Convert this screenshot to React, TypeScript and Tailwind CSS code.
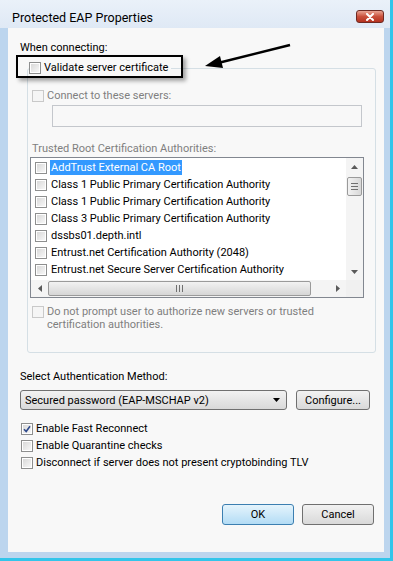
import React from 'react'

const CERTS = [
  'AddTrust External CA Root',
  'Class 1 Public Primary Certification Authority',
  'Class 1 Public Primary Certification Authority',
  'Class 3 Public Primary Certification Authority',
  'dssbs01.depth.intl',
  'Entrust.net Certification Authority (2048)',
  'Entrust.net Secure Server Certification Authority',
]

function CheckBox({ checked = false, disabled = false }: { checked?: boolean; disabled?: boolean }) {
  if (disabled) {
    return <span className="block h-3 w-3 shrink-0 border border-[#c9c9c9] bg-[#f5f5f5]" />
  }
  return (
    <span className="flex h-3 w-3 shrink-0 border border-[#8e8f8f] bg-white p-[1px]">
      <span className="flex h-full w-full items-center justify-center bg-gradient-to-br from-[#d9d9d9] to-[#f7f7f7]">
        {checked && (
          <svg viewBox="0 0 8 8" className="h-[8px] w-[8px]">
            <path d="M1 4.2 L3.2 6.5 L7 1.2" fill="none" stroke="#2f4a8c" strokeWidth="1.6" />
          </svg>
        )}
      </span>
    </span>
  )
}

function Tri({ dir }: { dir: 'up' | 'down' | 'left' | 'right' }) {
  const d = {
    up: 'M0 4 L3.5 0 L7 4 Z',
    down: 'M0 0 L7 0 L3.5 4 Z',
    left: 'M4 0 L4 7 L0 3.5 Z',
    right: 'M0 0 L4 3.5 L0 7 Z',
  }[dir]
  const vertical = dir === 'up' || dir === 'down'
  return (
    <svg viewBox={vertical ? '0 0 7 4' : '0 0 4 7'} className={vertical ? 'h-[4px] w-[7px]' : 'h-[7px] w-[4px]'}>
      <path d={d} fill="#5a5a5a" />
    </svg>
  )
}

function CertList() {
  return (
    <div className="ml-[2px] mt-[1px] flex h-[141px] w-[334px] flex-col border border-[#828790] bg-white">
      <div className="flex h-[122px]">
        <div className="flex-1 overflow-hidden pt-[1px]">
          {CERTS.map((name, i) => (
            <div key={i} className="flex h-[17px] items-center gap-[3px] pl-[4px] whitespace-nowrap">
              <CheckBox />
              <span className={i === 0 ? 'bg-[#3399ff] px-[1px] leading-[15px] text-white' : 'px-[1px] leading-[15px] text-black'}>
                {name}
              </span>
            </div>
          ))}
        </div>
        {/* vertical scrollbar */}
        <div className="flex w-[17px] flex-col items-center bg-[#f4f4f4]">
          <div className="flex h-[17px] items-center justify-center">
            <Tri dir="up" />
          </div>
          <div className="mt-[2px] flex h-[19px] w-[15px] flex-col items-center justify-center gap-[2px] rounded-[2px] border border-[#9a9a9a] bg-gradient-to-r from-[#f2f2f2] to-[#d8d8d8]">
            <span className="h-px w-[7px] bg-[#707070]" />
            <span className="h-px w-[7px] bg-[#707070]" />
            <span className="h-px w-[7px] bg-[#707070]" />
          </div>
          <div className="flex-1" />
          <div className="flex h-[17px] items-center justify-center">
            <Tri dir="down" />
          </div>
        </div>
      </div>
      {/* horizontal scrollbar */}
      <div className="flex h-[17px] items-center bg-[#f4f4f4]">
        <div className="flex h-full w-[17px] items-center justify-center">
          <Tri dir="left" />
        </div>
        <div className="flex h-full flex-1 items-center">
          <div className="flex h-[15px] w-[263px] items-center justify-center gap-[2px] rounded-[2px] border border-[#9a9a9a] bg-gradient-to-b from-[#f2f2f2] to-[#d6d6d6]">
            <span className="h-[7px] w-px bg-[#707070]" />
            <span className="h-[7px] w-px bg-[#707070]" />
            <span className="h-[7px] w-px bg-[#707070]" />
          </div>
        </div>
        <div className="flex h-full w-[17px] items-center justify-center">
          <Tri dir="right" />
        </div>
        <div className="h-full w-[17px] bg-[#f0f0f0]" />
      </div>
    </div>
  )
}

function OptionRow({ label, checked = false }: { label: string; checked?: boolean }) {
  return (
    <div className="ml-[1px] flex h-[17px] items-center gap-[3px]">
      <CheckBox checked={checked} />
      <span>{label}</span>
    </div>
  )
}

export default function App() {
  return (
    <div className="h-[561px] w-[393px] overflow-hidden border-b-[3px] border-r-[3px] border-[#33c5ea] bg-[#bcd5ee] font-['Roboto',sans-serif] text-[11px] leading-[15px] text-black">
      {/* Title bar */}
      <div className="flex h-[28px] items-start justify-between bg-gradient-to-b from-[#eaf1f9] to-[#dfe9f5] pl-[12px] pr-[6px] pt-[9px]">
        <span className="text-[12.5px] leading-[17px]">Protected EAP Properties</span>
        <div className="mt-[1px] flex h-[13px] w-[28px] items-center justify-center rounded-[3px] border border-[#6e2a23] bg-gradient-to-b from-[#e8a393] via-[#c9503c] to-[#b5321f]">
          <svg viewBox="0 0 10 8" className="h-[8px] w-[10px]">
            <path d="M2 1 L8 7 M8 1 L2 7" stroke="white" strokeWidth="2" strokeLinecap="round" />
          </svg>
        </div>
      </div>

      {/* Client area */}
      <div className="relative ml-[8px] flex h-[524px] w-[376px] flex-col bg-[#f8f8f8] pl-[12px] pr-[8px]">
        <div className="mt-[12px]">When connecting:</div>

        {/* Group box */}
        <div className="ml-[7px] mt-[13px] flex flex-col rounded-[3px] border border-[#d5dfe5] pb-[21px]">
          <div className="-mt-[9px] ml-[1px] flex h-[15px] w-fit items-center gap-[3px] bg-[#f8f8f8] pr-[3px]">
            <CheckBox />
            <span>Validate server certificate</span>
          </div>

          <div className="ml-[4px] mt-[13px] flex h-[15px] items-center gap-[3px] text-[#7f7f7f]">
            <CheckBox disabled />
            <span>Connect to these servers:</span>
          </div>
          <div className="ml-[24px] mt-[2px] h-[22px] w-[310px] border border-[#c4c7cc] bg-[#f8f8f8]" />

          <div className="ml-[4px] mt-[14px] text-[#7f7f7f]">Trusted Root Certification Authorities:</div>
          <CertList />

          <div className="ml-[4px] mt-[7px] flex gap-[3px] text-[#7f7f7f]">
            <span className="mt-[1px]">
              <CheckBox disabled />
            </span>
            <div className="flex flex-col">
              <span className="h-[13px] leading-[13px]">Do not prompt user to authorize new servers or trusted</span>
              <span className="h-[13px] leading-[13px]">certification authorities.</span>
            </div>
          </div>
        </div>

        <div className="mt-[16px]">Select Authentication Method:</div>
        <div className="mt-[6px] flex items-center">
          <div className="flex h-[20px] w-[267px] items-center justify-between rounded-[3px] border border-[#707070] bg-gradient-to-b from-[#f2f2f2] to-[#d9d9d9] pl-[4px] pr-[6px]">
            <span>Secured password (EAP-MSCHAP v2)</span>
            <svg viewBox="0 0 7 4" className="h-[4px] w-[7px]">
              <path d="M0 0 L7 0 L3.5 4 Z" fill="#000" />
            </svg>
          </div>
          <div className="ml-[9px] flex h-[20px] w-[74px] items-center justify-center rounded-[3px] border border-[#707070] bg-gradient-to-b from-[#f2f2f2] to-[#d9d9d9]">
            Configure...
          </div>
        </div>

        <div className="mt-[10px] flex flex-col">
          <OptionRow label="Enable Fast Reconnect" checked />
          <OptionRow label="Enable Quarantine checks" />
          <OptionRow label="Disconnect if server does not present cryptobinding TLV" />
        </div>

        <div className="mt-[33px] flex justify-end gap-[8px] pr-[2px]">
          <div className="flex h-[21px] w-[72px] items-center justify-center rounded-[3px] border border-[#3c7fb1] bg-gradient-to-b from-[#e5f4fc] to-[#b3dcf5]">
            OK
          </div>
          <div className="flex h-[21px] w-[72px] items-center justify-center rounded-[3px] border border-[#707070] bg-gradient-to-b from-[#f2f2f2] to-[#d9d9d9]">
            Cancel
          </div>
        </div>

        {/* Annotation overlays */}
        <div className="pointer-events-none absolute left-[8px] top-[27px] h-[23px] w-[167px] border-2 border-black shadow-[3px_3px_4px_rgba(0,0,0,0.35)]" />
        <svg className="pointer-events-none absolute left-[190px] top-[10px] h-[35px] w-[100px]" viewBox="0 0 100 35">
          <line x1="92" y1="7" x2="20" y2="25" stroke="#000" strokeWidth="2.6" />
          <path d="M7 28 L25 30 L22 18 Z" fill="#000" />
        </svg>
      </div>
    </div>
  )
}
